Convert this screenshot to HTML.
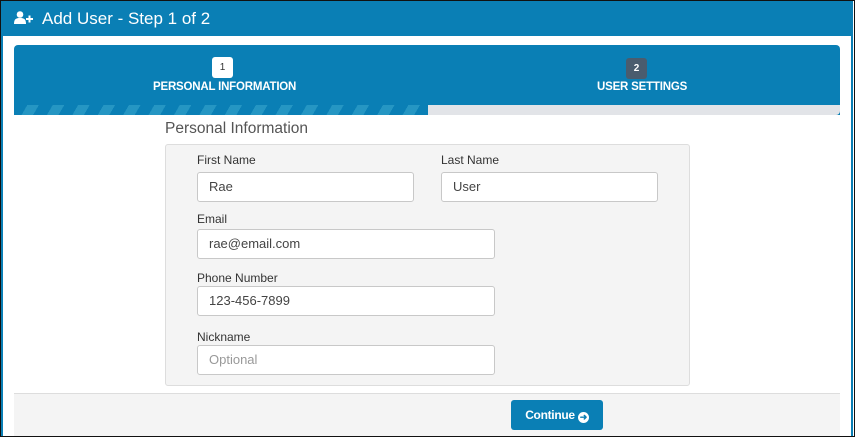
<!DOCTYPE html>
<html><head><style>
*{box-sizing:border-box;margin:0;padding:0}
body{width:855px;height:437px;overflow:hidden;background:#fff;font-family:"Liberation Sans",sans-serif;position:relative}
.frame{position:absolute;left:0;top:0;width:855px;height:437px;border:1px solid #111}
.inner{position:absolute;left:1px;top:1px;width:852px;height:435px;border:2px solid #0a7fb5;border-top:none;border-bottom:none}
.hdr{position:absolute;left:1px;top:1px;width:852px;height:35px;background:#0a7fb5;color:#fff;font-size:17px;line-height:35px;padding-left:41px}
.prog{position:absolute;left:14px;top:45px;width:826px;height:70px;background:#0a7fb5;border-radius:4px 4px 0 0;overflow:hidden}
.stripe{position:absolute;left:0;top:60px;width:414px;height:10px;background:repeating-linear-gradient(-60deg,#0a7fb5 0 12px,#2596c3 12px 22px)}
.grey{position:absolute;left:414px;top:60px;width:412px;height:10px;background:#e2e4e8;border-radius:0 0 4px 0}
.step{position:absolute;width:21px;height:21px;border-radius:3px;font-size:10px;text-align:center;line-height:21px}
.slab{position:absolute;color:#fff;font-weight:bold;font-size:11.5px;letter-spacing:-0.2px}
.title{position:absolute;left:165px;top:120px;font-size:15.5px;color:#555}
.panel{position:absolute;left:165px;top:144px;width:525px;height:242px;background:#f4f4f4;border:1px solid #ddd;border-radius:3px}
.lab{position:absolute;font-size:12px;color:#333}
.inp{position:absolute;height:30px;background:#fff;border:1px solid #c8c8c8;border-radius:3px;font-size:13px;color:#444;padding-left:11px;line-height:28px}
.foot{position:absolute;left:14px;top:393px;width:826px;height:43px;background:#f4f4f4;border-top:1px solid #ddd}
.btn{position:absolute;left:511px;top:400px;width:92px;height:30px;background:#0a7fb5;border-radius:3px;color:#fff;font-weight:bold;font-size:12px;line-height:30px;text-align:center;letter-spacing:-0.3px}
</style></head><body>
<div class="frame"></div><div class="inner"></div>
<div class="hdr">Add User - Step 1 of 2</div>
<svg style="position:absolute;left:14px;top:11px" width="20" height="14" viewBox="0 0 20 14"><circle cx="6" cy="3.5" r="3.3" fill="#fff"/><path d="M0 13 C0 8 2 7 6 7 C10 7 12 8 12 13Z" fill="#fff"/><rect x="12" y="7" width="7" height="2" fill="#fff"/><rect x="14.5" y="4.5" width="2" height="7" fill="#fff"/></svg>
<div class="prog"><div class="stripe"></div><div class="grey"></div></div>
<div class="step" style="left:212px;top:57px;background:#fff;color:#333">1</div>
<div class="slab" style="left:153px;top:81px">PERSONAL INFORMATION</div>
<div class="step" style="left:626px;top:58px;background:#4a5c6e;color:#fff;font-weight:bold">2</div>
<div class="slab" style="left:597px;top:81px">USER SETTINGS</div>
<div class="title">Personal Information</div>
<div class="panel"></div>
<div class="lab" style="left:197px;top:153px">First Name</div>
<div class="inp" style="left:197px;top:172px;width:217px">Rae</div>
<div class="lab" style="left:441px;top:153px">Last Name</div>
<div class="inp" style="left:441px;top:172px;width:217px">User</div>
<div class="lab" style="left:197px;top:212px">Email</div>
<div class="inp" style="left:197px;top:229px;width:298px">rae@email.com</div>
<div class="lab" style="left:197px;top:271px">Phone Number</div>
<div class="inp" style="left:197px;top:286px;width:298px">123-456-7899</div>
<div class="lab" style="left:197px;top:330px">Nickname</div>
<div class="inp" style="left:197px;top:345px;width:298px;color:#999">Optional</div>
<div class="foot"></div>
<div class="btn">Continue <span style="display:inline-block;width:11px;height:11px;border-radius:50%;background:#fff;color:#0a7fb5;font-size:9px;line-height:11px;vertical-align:-1px">➜</span></div>
</body></html>
